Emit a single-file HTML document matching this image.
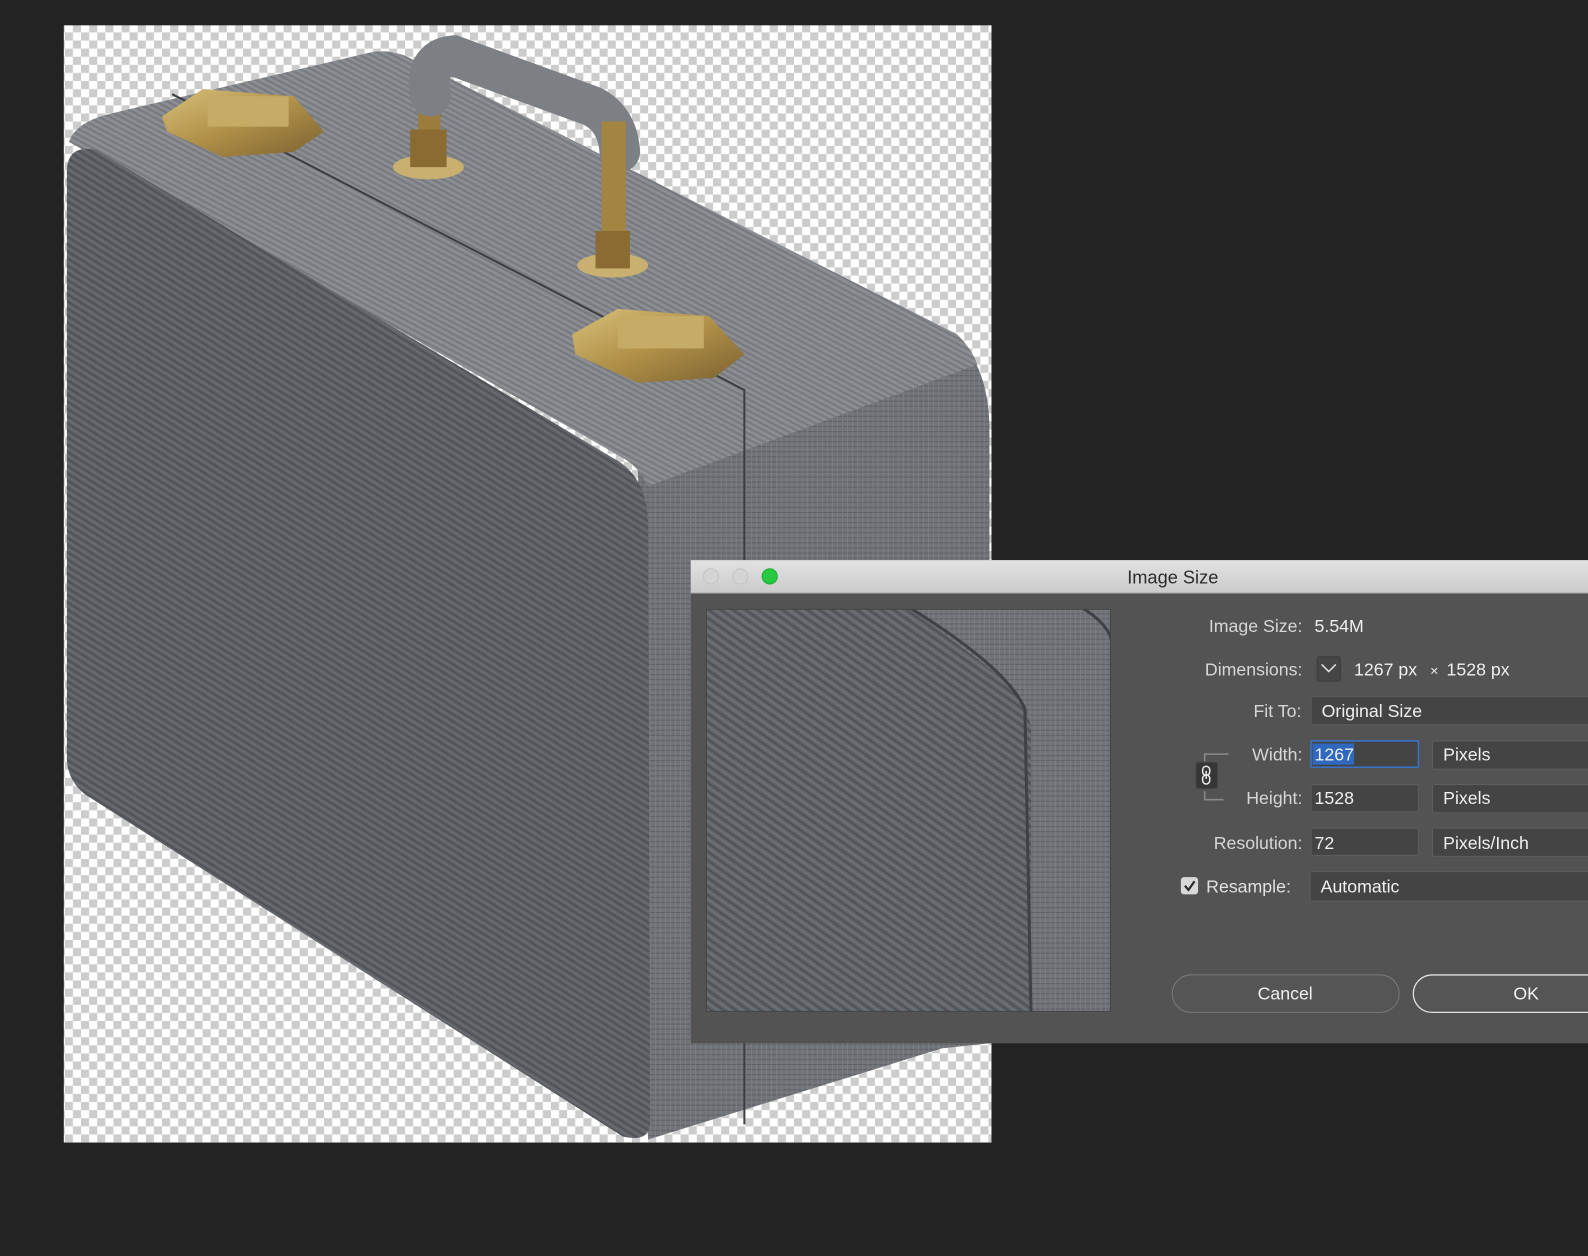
<!DOCTYPE html>
<html><head><meta charset="utf-8"><style>
html,body{margin:0;padding:0;background:#232323;overflow:hidden}
svg{display:block}
text{font-family:"Liberation Sans",sans-serif}
</style></head><body>
<svg width="1588" height="1256" viewBox="0 0 1568 1240" preserveAspectRatio="none" xmlns="http://www.w3.org/2000/svg">
<defs>
<pattern id="chk" width="16" height="16" patternUnits="userSpaceOnUse">
<rect width="16" height="16" fill="#ffffff"/>
<rect width="8" height="8" fill="#cccccc"/><rect x="8" y="8" width="8" height="8" fill="#cccccc"/>
</pattern>
<pattern id="tex1" width="6" height="6" patternUnits="userSpaceOnUse" patternTransform="rotate(32)">
<rect width="6" height="6" fill="#5d6166"/>
<line x1="0" y1="1" x2="6" y2="1" stroke="#4a4d51" stroke-width="1.2"/>
<line x1="0" y1="4" x2="6" y2="4" stroke="#72767b" stroke-width="0.8"/>
</pattern>
<pattern id="tex2" width="5" height="5" patternUnits="userSpaceOnUse" patternTransform="rotate(28)">
<rect width="5" height="5" fill="#83868a"/>
<line x1="0" y1="1" x2="5" y2="1" stroke="#707377" stroke-width="1"/>
<line x1="0" y1="3.5" x2="5" y2="3.5" stroke="#96999c" stroke-width="0.8"/>
</pattern>
<pattern id="tex3" width="5" height="5" patternUnits="userSpaceOnUse">
<rect width="5" height="5" fill="#717479"/>
<line x1="0" y1="1" x2="5" y2="1" stroke="#5c5f63" stroke-width="1"/>
<line x1="2" y1="0" x2="2" y2="5" stroke="#818488" stroke-width="0.6"/>
</pattern>
<pattern id="tex4" width="7" height="7" patternUnits="userSpaceOnUse" patternTransform="rotate(35)">
<rect width="7" height="7" fill="#606368"/>
<line x1="0" y1="1" x2="7" y2="1" stroke="#4a4d51" stroke-width="1.4"/>
<line x1="0" y1="4.5" x2="7" y2="4.5" stroke="#767a7f" stroke-width="1"/>
</pattern>
<linearGradient id="tb" x1="0" y1="0" x2="0" y2="1"><stop offset="0" stop-color="#e2e2e2"/><stop offset="1" stop-color="#cbcbcb"/></linearGradient>
<linearGradient id="gold" x1="0" y1="0" x2="1" y2="1"><stop offset="0" stop-color="#d8c07a"/><stop offset="0.5" stop-color="#b09048"/><stop offset="1" stop-color="#7a6030"/></linearGradient>
<clipPath id="pv"><rect x="697" y="601" width="400" height="398"/></clipPath>
</defs>
<rect width="1568" height="1240" fill="#232323"/>
<rect x="63" y="25" width="916" height="1103" fill="url(#chk)"/>
<path d="M630,465 L945,335 Q975,360 977,420 L977,1030 L930,1035 L640,1125 Z" fill="url(#tex3)"/>
<path d="M68,140 Q75,120 110,112 L365,52 Q380,48 400,55 L945,330 Q960,345 965,360 L640,480 Q630,460 615,452 Z" fill="url(#tex2)"/>
<path d="M66,170 Q66,142 95,148 L605,452 Q640,470 640,520 L642,1110 Q640,1128 615,1122 L85,785 Q65,770 66,745 Z" fill="url(#tex1)"/>
<path d="M170,93 L735,385 L735,1110" fill="none" stroke="#3c3f42" stroke-width="2"/>
<rect x="413" y="95" width="22" height="60" fill="#9c7c3c"/>
<ellipse cx="423" cy="165" rx="35" ry="12" fill="#c9b070"/>
<rect x="405" y="128" width="36" height="37" fill="#8a6c33"/>
<path d="M425,95 Q418,58 448,55 L585,105 Q610,118 612,150" fill="none" stroke="#7c7f83" stroke-width="40" stroke-linecap="round"/>
<rect x="594" y="120" width="24" height="120" fill="#a38440"/>
<ellipse cx="605" cy="262" rx="35" ry="12" fill="#c9b070"/>
<rect x="588" y="228" width="34" height="37" fill="#8a6c33"/>
<path d="M160,115 L200,88 L290,95 L320,130 L290,150 L220,155 L165,130 Z" fill="url(#gold)"/>
<rect x="205" y="95" width="80" height="30" fill="#c5ab66"/>
<path d="M565,330 L610,305 L700,312 L735,350 L705,373 L630,378 L568,350 Z" fill="url(#gold)"/>
<rect x="610" y="312" width="85" height="32" fill="#c5ab66"/>
<rect x="682" y="553" width="900" height="477" fill="#535353"/>
<rect x="682" y="553" width="900" height="32" fill="url(#tb)"/>
<line x1="682" y1="585.5" x2="1568" y2="585.5" stroke="#a8a8a8"/>
<circle cx="702" cy="569" r="7.5" fill="#d4d4d4" stroke="#c4c4c4"/>
<circle cx="731" cy="569" r="7.5" fill="#d4d4d4" stroke="#c4c4c4"/>
<circle cx="760" cy="569" r="7.5" fill="#27c93f" stroke="#1eab33"/>
<text x="1158" y="576" text-anchor="middle" font-size="18" fill="#2c2c2c">Image Size</text>
<g clip-path="url(#pv)">
<rect x="697" y="601" width="400" height="398" fill="url(#tex4)"/>
<path d="M900,601 L1097,601 L1097,999 L1018,999 L1018,720 Q1015,690 990,670 Z" fill="url(#tex3)"/>
<path d="M900,601 Q995,660 1012,700 L1018,999" fill="none" stroke="#3e4145" stroke-width="3"/>
<path d="M1070,601 Q1092,615 1097,630" fill="none" stroke="#3e4145" stroke-width="3"/>
</g>
<rect x="697.5" y="601.5" width="399" height="397" fill="none" stroke="#444"/>
<g font-size="17.5" fill="#d6d6d6" text-anchor="end">
<text x="1286" y="624">Image Size:</text>
<text x="1286" y="667">Dimensions:</text>
<text x="1285" y="708">Fit To:</text>
<text x="1286" y="751">Width:</text>
<text x="1286" y="794">Height:</text>
<text x="1286" y="838">Resolution:</text>
</g>
<text x="1191" y="881" font-size="17.5" fill="#e0e0e0">Resample:</text>
<g font-size="17.5" fill="#eeeeee">
<text x="1298" y="624">5.54M</text>
<text x="1337" y="667">1267 px <tspan dx="8" font-size="14">×</tspan><tspan dx="8">1528 px</tspan></text>
</g>
<rect x="1300.5" y="648.5" width="23" height="24" rx="2" fill="#464646" stroke="#3c3c3c"/>
<path d="M1305,656 L1312,663 L1319,656" fill="none" stroke="#e0e0e0" stroke-width="1.5"/>
<g fill="#444444" stroke="#5e5e5e">
<rect x="1294.5" y="687.5" width="290" height="28" rx="2"/>
<rect x="1414.5" y="731.5" width="170" height="28" rx="2"/>
<rect x="1294.5" y="774.5" width="106" height="27" rx="2"/>
<rect x="1414.5" y="774.5" width="170" height="28" rx="2"/>
<rect x="1294.5" y="817.5" width="106" height="27" rx="2"/>
<rect x="1414.5" y="817.5" width="170" height="28" rx="2"/>
<rect x="1293.5" y="860.5" width="290" height="29" rx="2"/>
</g>
<rect x="1294.5" y="731.5" width="106" height="26" rx="1" fill="#444" stroke="#3a72c8" stroke-width="1.5"/>
<rect x="1296" y="734" width="41" height="21" fill="#2f68bd"/>
<g font-size="17.5" fill="#efefef">
<text x="1305" y="708">Original Size</text>
<text x="1298" y="751">1267</text>
<text x="1425" y="751">Pixels</text>
<text x="1298" y="794">1528</text>
<text x="1425" y="794">Pixels</text>
<text x="1298" y="838">72</text>
<text x="1425" y="838">Pixels/Inch</text>
<text x="1304" y="881">Automatic</text>
</g>
<path d="M1189.5,752 L1189.5,744.5 L1213,744.5" fill="none" stroke="#8a8a8a" stroke-width="1.5"/>
<path d="M1189.5,781 L1189.5,789.5 L1208,789.5" fill="none" stroke="#8a8a8a" stroke-width="1.5"/>
<rect x="1181" y="752.5" width="21" height="26" rx="2" fill="#363636" stroke="#454545"/>
<rect x="1187.5" y="756.5" width="7" height="9" rx="3.5" fill="none" stroke="#e8e8e8" stroke-width="1.5"/>
<rect x="1187.5" y="765" width="7" height="9" rx="3.5" fill="none" stroke="#e8e8e8" stroke-width="1.5"/>
<line x1="1191" y1="761" x2="1191" y2="769" stroke="#e8e8e8" stroke-width="1.5"/>
<rect x="1166" y="866" width="17" height="17" rx="3" fill="#d8d8d8"/>
<path d="M1170,874.5 L1173.5,878.5 L1179.5,870" fill="none" stroke="#2a2a2a" stroke-width="2.2"/>
<rect x="1157.5" y="962.5" width="224" height="37" rx="18.5" fill="#555" stroke="#7a7a7a"/>
<text x="1269" y="987" text-anchor="middle" font-size="17.5" fill="#eeeeee">Cancel</text>
<rect x="1395.5" y="962.5" width="220" height="37" rx="18.5" fill="#555" stroke="#e0e0e0" stroke-width="1.3"/>
<text x="1507" y="987" text-anchor="middle" font-size="17.5" fill="#f2f2f2">OK</text>
</svg>
</body></html>
